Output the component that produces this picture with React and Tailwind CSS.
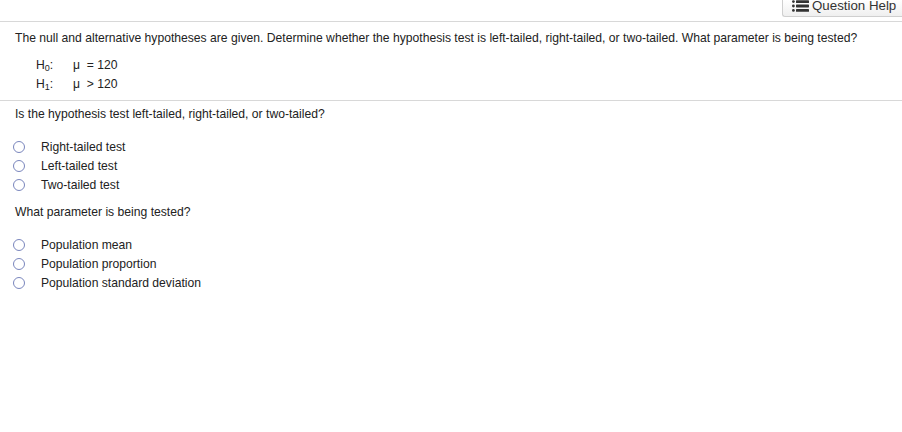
import React from 'react';

function ListIcon() {
  return (
    <svg width="17" height="12" viewBox="0 0 17 12" className="shrink-0">
      <circle cx="1.4" cy="1.6" r="1.4" fill="#333" />
      <circle cx="1.4" cy="6" r="1.4" fill="#333" />
      <circle cx="1.4" cy="10.4" r="1.4" fill="#333" />
      <rect x="4" y="0.2" width="13" height="2.8" rx="0.6" fill="#333" />
      <rect x="4" y="4.6" width="13" height="2.8" rx="0.6" fill="#333" />
      <rect x="4" y="9" width="13" height="2.8" rx="0.6" fill="#333" />
    </svg>
  );
}

function Radio({ label }) {
  return (
    <label className="flex items-center h-[19px]">
      <span className="w-[12px] h-[12px] rounded-full border border-[#7a86bd] bg-white ml-[13px] mr-[16px]" />
      <span>{label}</span>
    </label>
  );
}

export default function App() {
  return (
    <div
      className="w-[902px] h-[432px] bg-white text-[#222] text-[12.15px] leading-[14px]"
      style={{ fontFamily: '"Liberation Sans", Arial, sans-serif' }}
    >
      <div className="h-[22px] border-b border-[#d8d8d8] flex justify-end">
        <button className="h-[17px] w-[120px] flex items-center gap-[3px] pl-[9px] pb-[4px] border-l border-b border-[#cfcfcf] rounded-bl-[3px] bg-gradient-to-b from-white to-[#efefef] text-[13.3px] text-[#333] leading-none">
          <ListIcon />
          <span>Question Help</span>
        </button>
      </div>

      <p className="pl-[15px] pt-[9px]">
        The null and alternative hypotheses are given. Determine whether the hypothesis test is left-tailed, right-tailed, or two-tailed. What parameter is being tested?
      </p>

      <div className="pl-[36px] pt-[13px] flex flex-col gap-[5px]">
        <div className="flex items-center">
          <span className="w-[37px]">H<sub className="text-[9px]">0</sub>:</span>
          <span>μ&nbsp;&nbsp;=&nbsp;120</span>
        </div>
        <div className="flex items-center">
          <span className="w-[37px]">H<sub className="text-[9px]">1</sub>:</span>
          <span>μ&nbsp;&nbsp;&gt;&nbsp;120</span>
        </div>
      </div>

      <div className="mt-[9px] border-t border-[#d8d8d8] pt-[6px] pl-[15px]">
        Is the hypothesis test left-tailed, right-tailed, or two-tailed?
      </div>

      <div className="mt-[16px] flex flex-col">
        <Radio label="Right-tailed test" />
        <Radio label="Left-tailed test" />
        <Radio label="Two-tailed test" />
      </div>

      <div className="pl-[15px] mt-[11px]">What parameter is being tested?</div>

      <div className="mt-[16px] flex flex-col">
        <Radio label="Population mean" />
        <Radio label="Population proportion" />
        <Radio label="Population standard deviation" />
      </div>
    </div>
  );
}
